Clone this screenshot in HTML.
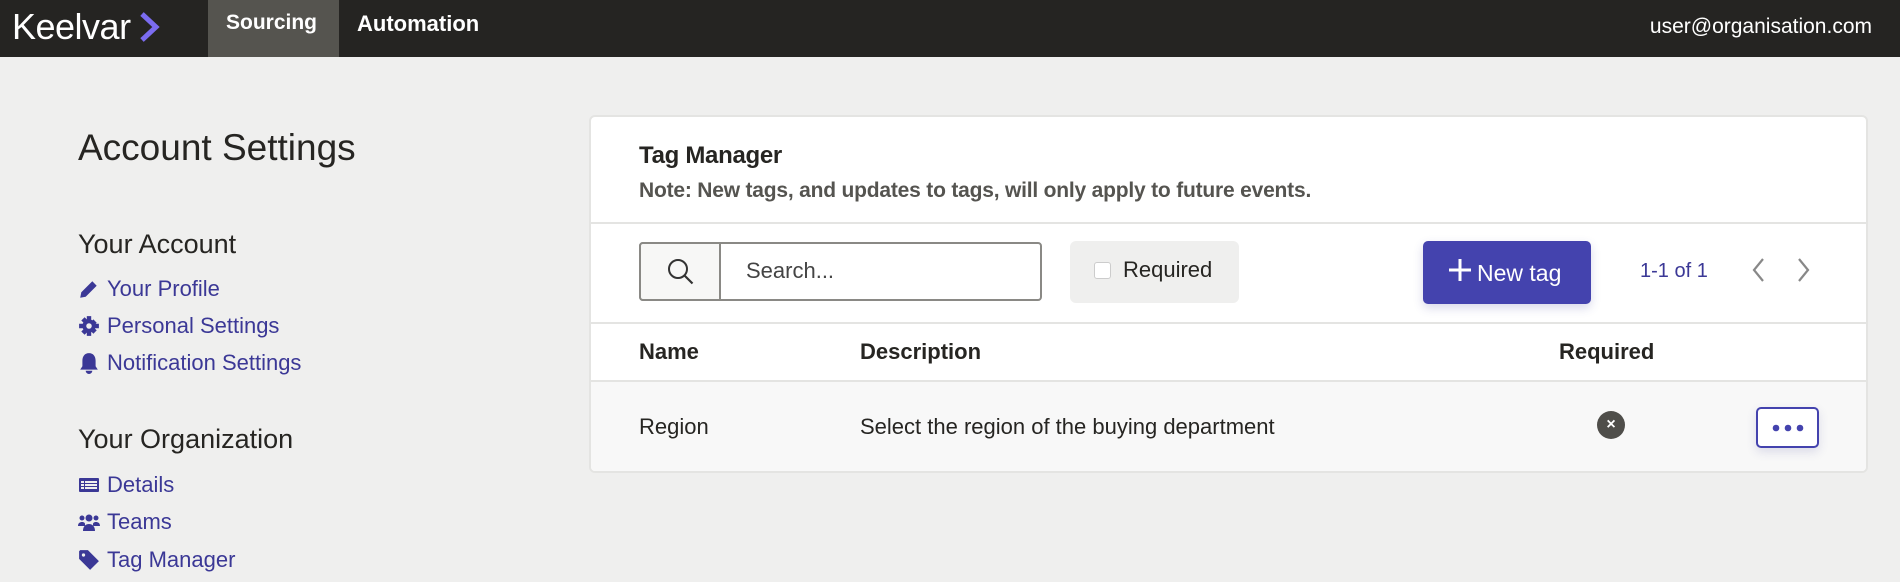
<!DOCTYPE html>
<html><head><meta charset="utf-8"><style>
*{box-sizing:border-box;margin:0;padding:0}
body{width:1900px;height:582px;overflow:hidden;background:#efefee;font-family:"Liberation Sans",sans-serif;color:#262522;position:relative}
.nav{position:absolute;left:0;top:0;width:1900px;height:57px;background:#252422;color:#fff}
.abs{position:absolute;white-space:nowrap}
.card{position:absolute;left:589px;top:115px;width:1279px;height:358px;background:#fff;border:2px solid #e4e4e2;border-radius:6px;overflow:hidden}
.sep{position:absolute;left:0;width:100%;height:2px;background:#e4e4e2}
.lnk{position:absolute;left:78px;font-size:22px;color:#3b3896;white-space:nowrap;display:flex;align-items:center}
.lnk svg{width:22px;height:22px;margin-right:7px;fill:#3b3896}
</style></head><body>
<div class="nav">
 <div class="abs" style="left:12px;top:6px;font-size:36px;letter-spacing:-0.5px">Keelvar</div>
 <svg class="abs" style="left:139px;top:12px" width="22" height="30" viewBox="0 0 22 30"><path d="M3 2 L17 15 L3 28" stroke="#7b6cf0" stroke-width="5" fill="none"/></svg>
 <div class="abs" style="left:208px;top:0;width:131px;height:57px;background:#55544f"></div>
 <div class="abs" style="left:226px;top:11px;font-size:21px;font-weight:bold">Sourcing</div>
 <div class="abs" style="left:357px;top:11px;font-size:22px;font-weight:bold">Automation</div>
 <div class="abs" style="right:28px;top:15px;font-size:21px">user@organisation.com</div>
</div>

<div class="abs" style="left:78px;top:127px;font-size:37px">Account Settings</div>
<div class="abs" style="left:78px;top:229px;font-size:27px">Your Account</div>
<div class="lnk" style="top:276px"><svg viewBox="0 0 20 20"><path d="M2 18 L3 13 L13 3 L17 7 L7 17 Z"/></svg>Your Profile</div>
<div class="lnk" style="top:313px"><svg viewBox="0 0 20 20"><circle cx="10" cy="10" r="6"/><path d="M8 1h4v4h-4zM8 15h4v4h-4zM1 8h4v4h-4zM15 8h4v4h-4zM3 5l3-3 3 3-3 3zM14 4l3 3-3 3-3-3zM3 15l3-3 3 3-3 3zM14 11l3 3-3 3-3-3z"/><circle cx="10" cy="10" r="2.5" fill="#efefee"/></svg>Personal Settings</div>
<div class="lnk" style="top:350px"><svg viewBox="0 0 20 20"><path d="M10 1c-4 0-6 3-6 7v5l-2 3h16l-2-3V8c0-4-2-7-6-7zM7 17a3 3 0 0 0 6 0z"/></svg>Notification Settings</div>
<div class="abs" style="left:78px;top:424px;font-size:27px">Your Organization</div>
<div class="lnk" style="top:472px"><svg viewBox="0 0 22 20"><rect x="1" y="3" width="20" height="14" rx="1"/><path d="M3 6h3v2H3zM7 6h12v2H7zM3 9h3v2H3zM7 9h12v2H7zM3 12h3v2H3zM7 12h12v2H7z" fill="#efefee"/></svg>Details</div>
<div class="lnk" style="top:509px"><svg viewBox="0 0 22 20"><circle cx="4" cy="6" r="2.5"/><circle cx="18" cy="6" r="2.5"/><circle cx="11" cy="6" r="3.5"/><path d="M0 14c0-3 2-4 4-4s3 1 3 2v2zM22 14c0-3-2-4-4-4s-3 1-3 2v2zM5 19c0-5 3-7 6-7s6 2 6 7z"/></svg>Teams</div>
<div class="lnk" style="top:547px"><svg viewBox="0 0 20 20"><path d="M1 2v7l10 10 8-8L9 1H2zM5 4a1.5 1.5 0 1 1 0 3 1.5 1.5 0 0 1 0-3z"/></svg>Tag Manager</div>

<div class="card">
 <div class="abs" style="left:48px;top:25px;font-size:24px;font-weight:bold;letter-spacing:-0.3px">Tag Manager</div>
 <div class="abs" style="left:48px;top:62px;font-size:21px;font-weight:bold;color:#555450;letter-spacing:-0.2px">Note: New tags, and updates to tags, will only apply to future events.</div>
 <div class="sep" style="top:105px"></div>
 <div class="abs" style="left:48px;top:125px;width:403px;height:59px;border:2px solid #8a8985;border-radius:4px;background:#fff"></div>
 <div class="abs" style="left:48px;top:125px;width:82px;height:59px;border:2px solid #8a8985;border-radius:4px 0 0 4px;background:#f7f7f6"></div>
 <svg class="abs" style="left:76px;top:141px" width="28" height="28" viewBox="0 0 28 28"><circle cx="11" cy="11" r="9" stroke="#333" stroke-width="2" fill="none"/><path d="M17.5 17.5l8 8" stroke="#333" stroke-width="2.2"/></svg>
 <div class="abs" style="left:155px;top:141px;font-size:22px;color:#444">Search...</div>
 <div class="abs" style="left:479px;top:124px;width:169px;height:62px;background:#efefee;border-radius:6px"></div>
 <div class="abs" style="left:503px;top:145px;width:17px;height:17px;border:1px solid #ccc;border-radius:3px;background:#fff"></div>
 <div class="abs" style="left:532px;top:140px;font-size:22px">Required</div>
 <div class="abs" style="left:832px;top:124px;width:168px;height:63px;background:#4443ae;border-radius:5px;box-shadow:0 4px 10px rgba(60,60,150,.2)"></div>
 <svg class="abs" style="left:857px;top:141px" width="24" height="24" viewBox="0 0 24 24"><path d="M12 1v22M1 12h22" stroke="#fff" stroke-width="3"/></svg>
 <div class="abs" style="left:886px;top:143px;font-size:23px;color:#fff">New tag</div>
 <div class="abs" style="left:1049px;top:143px;font-size:20px;color:#3b3896">1-1 of 1</div>
 <svg class="abs" style="left:1160px;top:140px" width="60" height="26" viewBox="0 0 60 26"><path d="M12 2L3 13l9 11M48 2l9 11-9 11" stroke="#888" stroke-width="2.2" fill="none"/></svg>
 <div class="sep" style="top:205px"></div>
 <div class="abs" style="left:48px;top:222px;font-size:22px;font-weight:bold">Name</div>
 <div class="abs" style="left:269px;top:222px;font-size:22px;font-weight:bold">Description</div>
 <div class="abs" style="left:968px;top:222px;font-size:22px;font-weight:bold">Required</div>
 <div class="sep" style="top:263px"></div>
 <div class="abs" style="left:0;top:265px;width:100%;height:100px;background:#f8f8f8"></div>
 <div class="abs" style="left:48px;top:297px;font-size:22px">Region</div>
 <div class="abs" style="left:269px;top:297px;font-size:22px">Select the region of the buying department</div>
 <div class="abs" style="left:1006px;top:294px;width:28px;height:28px;border-radius:50%;background:#4f4e4a;color:#fff;font-size:16px;font-weight:bold;text-align:center;line-height:28px">×</div>
 <div class="abs" style="left:1165px;top:290px;width:63px;height:41px;border:2px solid #4443ae;border-radius:5px;background:#fff;box-shadow:0 4px 10px rgba(60,60,150,.15)"></div>
 <svg class="abs" style="left:1180px;top:306px" width="34" height="10" viewBox="0 0 34 10"><circle cx="5" cy="5" r="3.3" fill="#4443ae"/><circle cx="17" cy="5" r="3.3" fill="#4443ae"/><circle cx="29" cy="5" r="3.3" fill="#4443ae"/></svg>
</div>
</body></html>
